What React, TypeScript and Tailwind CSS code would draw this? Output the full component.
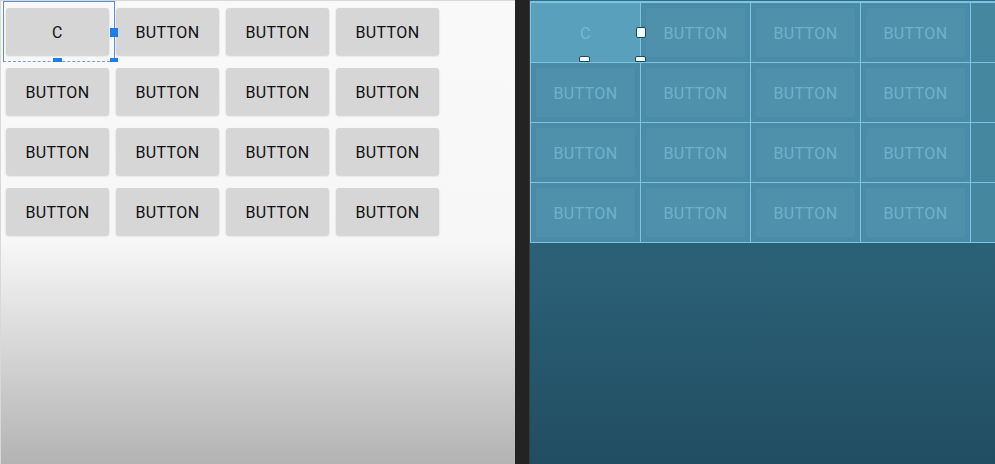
const rows = [0, 1, 2, 3];
const cols = [0, 1, 2, 3];

function DesignCell({ label }: { label: string }) {
  return (
    <div className="h-[60px] w-[110px] pl-[3px] pr-[4px] pt-[7px] pb-[6px]">
      <div className="flex h-full w-full items-center justify-center rounded-[3px] bg-[#d6d6d6] pt-[2px] text-[16px] tracking-[0.4px] text-[#111111] shadow-[0_1px_2px_rgba(0,0,0,0.18)]">
        {label}
      </div>
    </div>
  );
}

function BlueprintCell({ label, selected, edge }: { label: string; selected?: boolean; edge?: boolean }) {
  if (edge) {
    return <div className="h-[60px] w-[110px] border-r border-b border-[#7cc4df] bg-[#45879f]" />;
  }
  return (
    <div
      className={
        selected
          ? "h-[60px] w-[110px] border-r border-b border-[#7cc4df] bg-[#58a0bc] p-[5px]"
          : "h-[60px] w-[110px] border-r border-b border-[#7cc4df] bg-[#4a8ca7] p-[5px]"
      }
    >
      <div
        className={
          selected
            ? "flex h-full w-full items-center justify-center rounded-[2px] pt-[2px] text-[16px] tracking-[0.4px] text-[#78b9d0]"
            : "flex h-full w-full items-center justify-center rounded-[2px] bg-[#4f91ab] pt-[2px] text-[16px] tracking-[0.4px] text-[#6fb1ca]"
        }
      >
        {label}
      </div>
    </div>
  );
}

export default function App() {
  return (
    <div
      className="flex h-[464px] w-[995px] overflow-hidden"
      style={{ fontFamily: "Roboto, 'Liberation Sans', sans-serif" }}
    >
      {/* design surface */}
      <div className="relative w-[515px] shrink-0 border-l border-t border-[#d8d8d8] bg-[linear-gradient(to_bottom,#f9f9f9_0%,#f7f7f7_52%,#b3b3b3_100%)]">
        <div className="ml-[2px] grid grid-cols-[repeat(4,110px)]">
          {rows.map((r) =>
            cols.map((c) => (
              <DesignCell key={`${r}-${c}`} label={r === 0 && c === 0 ? "C" : "BUTTON"} />
            ))
          )}
        </div>

        {/* selection of first button */}
        <div className="absolute left-[2px] top-0 h-[61px] w-[112px] border-l border-t border-r border-b border-[#5b8fd0] border-b-[#7a9fd0] [border-bottom-style:dashed]" />
        <div className="absolute left-[109px] top-[27px] h-[9px] w-[8px] bg-[#1a7fe6]" />
        <div className="absolute left-[52px] top-[57px] h-[4px] w-[9px] bg-[#1a7fe6]" />
        <div className="absolute left-[109px] top-[57px] h-[4px] w-[8px] bg-[#1a7fe6]" />
      </div>

      {/* divider */}
      <div className="w-[15px] shrink-0 border-r border-[#3a3a3a] bg-[#232323]" />

      {/* blueprint */}
      <div className="relative flex-1 bg-[linear-gradient(to_bottom,#306c83_0%,#2a5f75_60%,#224d61_100%)]">
        <div className="mt-[1px] grid w-max grid-cols-[repeat(5,110px)] border-t-2 border-l border-[#7cc4df]">
          {rows.map((r) =>
            [0, 1, 2, 3, 4].map((c) => (
              <BlueprintCell
                key={`${r}-${c}`}
                label={r === 0 && c === 0 ? "C" : "BUTTON"}
                selected={r === 0 && c === 0}
                edge={c === 4}
              />
            ))
          )}
        </div>

        <div className="absolute left-[106px] top-[27px] h-[11px] w-[10px] rounded-[2px] border border-[#1f4a5c] bg-[#f2fbff]" />
        <div className="absolute left-[49px] top-[56px] h-[6px] w-[11px] rounded-t-[2px] border border-[#1f4a5c] bg-[#f2fbff]" />
        <div className="absolute left-[105px] top-[56px] h-[6px] w-[11px] rounded-t-[2px] border border-[#1f4a5c] bg-[#f2fbff]" />
      </div>
    </div>
  );
}
